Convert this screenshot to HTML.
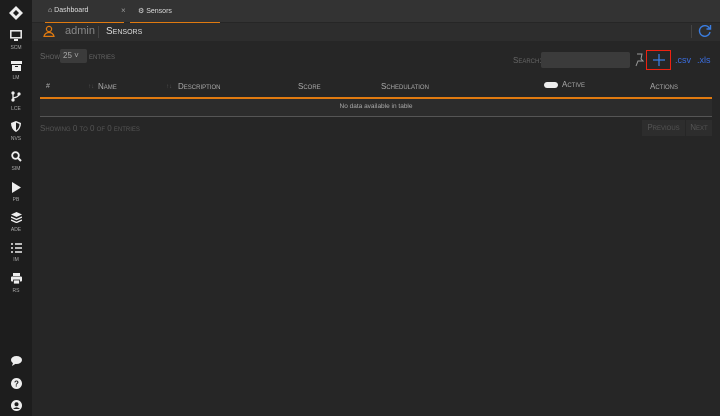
<!DOCTYPE html>
<html><head><style>
*{margin:0;padding:0;box-sizing:border-box}
body{width:720px;height:416px;background:#262626;font-family:"Liberation Sans",sans-serif;color:#bbb;position:relative;overflow:hidden;font-size:7px}
.sc{font-variant:small-caps}
.side{position:absolute;left:0;top:0;width:32px;height:416px;background:#1d1d1d}
.si{position:absolute;left:0;width:32px;text-align:center;color:#ddd;line-height:0}
.si span{display:block;font-size:5px;line-height:6px;color:#aaa;margin-top:4px}
.abs{position:absolute}
</style></head><body>
<div class="side">
 <svg class="abs" style="left:9px;top:6px" width="14" height="14" viewBox="0 0 14 14"><path d="M7 0L14 7L7 14L0 7Z" fill="#eee"/><path d="M7 4L10 7L7 10L4 7Z" fill="#1d1d1d"/></svg>
 <div class="si" style="top:30px"><svg width="12" height="11" viewBox="0 0 12 11"><rect x="0.8" y="0.8" width="10.4" height="7" fill="none" stroke="#eee" stroke-width="1.5"/><rect x="4" y="9" width="4" height="2" fill="#eee"/></svg><span>SCM</span></div>
 <div class="si" style="top:61px"><svg width="11" height="10" viewBox="0 0 11 10"><rect x="0" y="0" width="11" height="3" fill="#eee"/><rect x="1" y="4" width="9" height="6" fill="#eee"/><rect x="4" y="5" width="3" height="1" fill="#1d1d1d"/></svg><span>LM</span></div>
 <div class="si" style="top:91px"><svg width="10" height="11" viewBox="0 0 10 11"><circle cx="2" cy="2" r="1.6" fill="#eee"/><circle cx="2" cy="9" r="1.6" fill="#eee"/><circle cx="8" cy="3" r="1.6" fill="#eee"/><path d="M2 2V9M8 3Q8 6 2 7" stroke="#eee" fill="none" stroke-width="1.3"/></svg><span>LCE</span></div>
 <div class="si" style="top:121px"><svg width="10" height="11" viewBox="0 0 10 11"><path d="M5 0L10 2Q10 8 5 11Q0 8 0 2Z" fill="#eee"/><path d="M5 1.5L8.5 3Q8.5 7.5 5 9.5Z" fill="#1d1d1d"/></svg><span>NVS</span></div>
 <div class="si" style="top:151px"><svg width="11" height="11" viewBox="0 0 11 11"><circle cx="4.5" cy="4.5" r="3.3" stroke="#eee" stroke-width="1.8" fill="none"/><path d="M7 7L10 10" stroke="#eee" stroke-width="2"/></svg><span>SIM</span></div>
 <div class="si" style="top:182px"><svg width="10" height="11" viewBox="0 0 10 11"><path d="M1 0L10 5.5L1 11Z" fill="#eee"/></svg><span>PB</span></div>
 <div class="si" style="top:212px"><svg width="11" height="11" viewBox="0 0 11 11"><path d="M5.5 0L11 2.5L5.5 5L0 2.5Z" fill="#eee"/><path d="M0 5L5.5 7.5L11 5M0 8L5.5 10.5L11 8" stroke="#eee" stroke-width="1.4" fill="none"/></svg><span>ADE</span></div>
 <div class="si" style="top:243px"><svg width="11" height="10" viewBox="0 0 11 10"><path d="M4 1H11M4 5H11M4 9H11M0 1H2M0 5H2M0 9H2" stroke="#eee" stroke-width="1.5"/></svg><span>IM</span></div>
 <div class="si" style="top:273px"><svg width="11" height="11" viewBox="0 0 11 11"><rect x="2" y="0" width="7" height="3" fill="#eee"/><rect x="0" y="3.5" width="11" height="5" rx="1" fill="#eee"/><rect x="2.5" y="7" width="6" height="4" fill="#eee" stroke="#1d1d1d" stroke-width=".8"/></svg><span>RS</span></div>
 <div class="si" style="top:356px"><svg width="11" height="10" viewBox="0 0 11 10"><ellipse cx="5.5" cy="4" rx="5.5" ry="4" fill="#eee"/><path d="M2 7L1 10L5 7.5Z" fill="#eee"/></svg></div>
 <div class="si" style="top:378px"><svg width="11" height="11" viewBox="0 0 11 11"><circle cx="5.5" cy="5.5" r="5.5" fill="#eee"/><text x="5.5" y="8.5" font-size="8" font-weight="bold" text-anchor="middle" fill="#1d1d1d" font-family="Liberation Sans">?</text></svg></div>
 <div class="si" style="top:400px"><svg width="11" height="11" viewBox="0 0 11 11"><circle cx="5.5" cy="5.5" r="5.5" fill="#eee"/><circle cx="5.5" cy="4.2" r="2" fill="#1d1d1d"/><path d="M2 9Q5.5 5.5 9 9" fill="#1d1d1d"/></svg></div>
</div>
<div class="abs" style="left:32px;top:0;width:688px;height:22px;background:#333"></div>
<div class="abs" style="left:45px;top:22px;width:79px;height:1px;background:#e07a10"></div>
<div class="abs" style="left:130px;top:22px;width:90px;height:1px;background:#e07a10"></div>
<div class="abs" style="left:48px;top:7px;color:#ddd;font-size:7px">⌂ Dashboard</div>
<div class="abs" style="left:121px;top:6px;color:#999;font-size:8px">×</div>
<div class="abs" style="left:138px;top:7px;color:#ddd;font-size:7px">⚙ Sensors</div>
<div class="abs" style="left:32px;top:23px;width:688px;height:18px;background:#2d2d2d"></div>
<svg class="abs" style="left:43px;top:25px" width="12" height="12" viewBox="0 0 12 12"><circle cx="6" cy="4" r="2.6" stroke="#e07a10" stroke-width="1.2" fill="none"/><path d="M1 11.4H11Q10 7.5 6 7.5Q2 7.5 1 11.4Z" stroke="#e07a10" stroke-width="1.2" fill="none"/></svg>
<div class="abs" style="left:65px;top:25px;color:#888;font-size:11px">admin</div>
<div class="abs" style="left:98px;top:26px;width:1px;height:12px;background:#444"></div>
<div class="abs sc" style="left:106px;top:26px;color:#ddd;font-size:10px">Sensors</div>
<div class="abs" style="left:691px;top:25px;width:1px;height:13px;background:#444"></div>
<svg class="abs" style="left:698px;top:24px" width="14" height="14" viewBox="0 0 14 14"><path d="M11.5 4.5A5.3 5.3 0 1 0 12 8" stroke="#3a7de0" stroke-width="1.4" fill="none"/><path d="M12.5 1V5H8.5" stroke="#3a7de0" stroke-width="1.4" fill="none"/></svg>
<div class="abs sc" style="left:40px;top:52px;color:#666;font-size:8px">Show</div>
<div class="abs" style="left:60px;top:49px;width:27px;height:14px;background:#3b3b3b;border-radius:2px;color:#aaa;font-size:8px;padding:2px 3px">25 ˅</div>
<div class="abs sc" style="left:89px;top:52px;color:#666;font-size:8px">entries</div>
<div class="abs sc" style="left:513px;top:56px;color:#666;font-size:8px">Search:</div>
<div class="abs" style="left:541px;top:52px;width:89px;height:16px;background:#3b3b3b;border-radius:2px"></div>
<svg class="abs" style="left:633px;top:53px" width="11" height="14" viewBox="0 0 11 14"><path d="M4 1H9L8 6L10 8H5L3 13" stroke="#999" stroke-width="1" fill="none"/></svg>
<div class="abs" style="left:646px;top:50px;width:25px;height:20px;border:1.5px solid #e21"></div>
<svg class="abs" style="left:653px;top:54px" width="12" height="12" viewBox="0 0 12 12"><path d="M6 0V12M0 6H12" stroke="#3a7de0" stroke-width="1.3"/></svg>
<div class="abs" style="left:675px;top:55px;color:#3a6ee0;font-size:9px">.csv</div>
<div class="abs" style="left:697px;top:55px;color:#3a6ee0;font-size:9px">.xls</div>
<div class="abs" style="left:40px;top:80px;width:672px;font-size:8px;color:#aaa" >
 <span class="abs" style="left:6px;top:3px;font-size:7px">#</span>
 <span class="abs" style="left:48px;top:4px;color:#555;font-size:6px">↑↓</span>
 <span class="abs sc" style="left:58px;top:2px">Name</span>
 <span class="abs" style="left:126px;top:4px;color:#555;font-size:6px">↑↓</span>
 <span class="abs sc" style="left:138px;top:2px">Description</span>
 <span class="abs sc" style="left:258px;top:2px">Score</span>
 <span class="abs sc" style="left:341px;top:2px">Schedulation</span>
 <span class="abs" style="left:504px;top:2px;width:14px;height:6px;background:#eee;border-radius:3px"></span>
 <span class="abs sc" style="left:522px;top:0px">Active</span>
 <span class="abs sc" style="left:610px;top:2px">Actions</span>
</div>
<div class="abs" style="left:40px;top:97px;width:672px;height:2px;background:#e07a10"></div>
<div class="abs" style="left:40px;top:99px;width:672px;height:17px;background:#2c2c2c;text-align:center;font-size:6.5px;color:#aaa;padding-top:4px">No data available in table</div>
<div class="abs" style="left:40px;top:116px;width:672px;height:1px;background:#555"></div>
<div class="abs sc" style="left:40px;top:124px;color:#555;font-size:8px">Showing 0 to 0 of 0 entries</div>
<div class="abs sc" style="left:642px;top:120px;width:43px;height:16px;background:#2d2d2d;color:#555;font-size:8px;text-align:center;padding-top:3px">Previous</div>
<div class="abs sc" style="left:686px;top:120px;width:26px;height:16px;background:#2d2d2d;color:#555;font-size:8px;text-align:center;padding-top:3px">Next</div>
</body></html>
